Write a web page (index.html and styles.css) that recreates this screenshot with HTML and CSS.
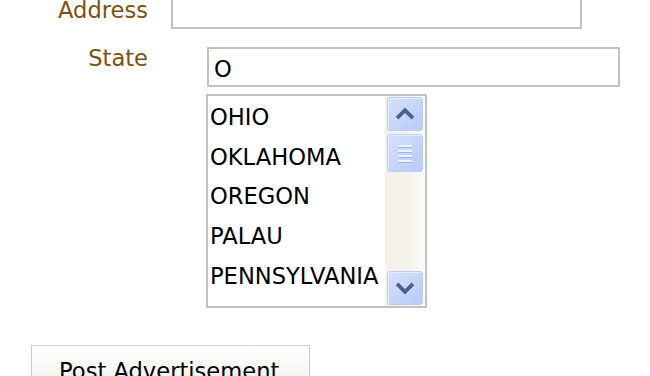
FILE: index.html
```html
<!DOCTYPE html>
<html lang="en">
<head>
    <meta charset="UTF-8">
    <meta name="viewport" content="width=device-width, initial-scale=1.0">
    <title>Post Advertisement</title>
    <link rel="stylesheet" href="styles.css">
</head>
<body>
    <form class="ad-form">
        <div class="row row-address">
            <label class="field-label">Address</label>
            <input class="text-field field-address" type="text">
        </div>
        <div class="row row-state">
            <label class="field-label label-state">State</label>
            <div class="state-col">
                <input class="text-field field-state" type="text" value="O">
                <div class="listbox">
                    <ul class="listbox__items">
                        <li>OHIO</li>
                        <li>OKLAHOMA</li>
                        <li>OREGON</li>
                        <li>PALAU</li>
                        <li>PENNSYLVANIA</li>
                    </ul>
                    <div class="scrollbar">
                        <div class="scrollbar__btn">
                            <svg viewBox="0 0 34 34"><path d="M10 20 L17 13 L24 20" /></svg>
                        </div>
                        <div class="scrollbar__thumb">
                            <span></span><span></span><span></span><span></span>
                        </div>
                        <div class="scrollbar__track"></div>
                        <div class="scrollbar__btn">
                            <svg viewBox="0 0 34 34"><path d="M10 14 L17 21 L24 14" /></svg>
                        </div>
                    </div>
                </div>
            </div>
        </div>
        <div class="row row-submit">
            <button class="post-btn" type="button">Post Advertisement</button>
        </div>
    </form>
</body>
</html>
```

FILE: styles.css
```css
*, *::before, *::after {
    box-sizing: border-box;
}
body {
    margin: 0;
    padding: 0;
    background: #fff;
    font-family: "DejaVu Sans", Verdana, sans-serif;
    font-size: 22.6px;
    overflow: hidden;
}
.ad-form { margin-top: -11px; }
.row { display: flex; align-items: flex-start; }
.field-label {
    width: 148px;
    text-align: right;
    color: #7a5310;
    line-height: 22px;
    margin-top: 10px;
}
.label-state { margin-top: 0; }
.text-field {
    height: 40px;
    border: 2px solid #c3c3bd;
    padding: 0 0 0 5px;
    font-family: inherit;
    font-size: 22.6px;
    color: #000;
    background: #fff;
    outline: none;
}
.field-address { width: 411px; margin-left: 23px; }
.row-state { margin-top: 18px; }
.state-col { margin-left: 59px; }
.field-state { width: 413px; display: block; padding-top: 3px; }

.listbox {
    display: flex;
    width: 221px;
    height: 214px;
    margin: 7px 0 0 -1px;
    border: 2px solid #c3c3bd;
    background: #fff;
}
.listbox__items {
    list-style: none;
    margin: 0;
    padding: 2px 0 0 2px;
    flex: 1;
    overflow: hidden;
    white-space: nowrap;
}
.listbox__items li { line-height: 39.7px; }

.scrollbar {
    width: 40px;
    display: flex;
    flex-direction: column;
    padding: 1px 2px 1px 2px;
    background: linear-gradient(to right, #f3f1ea 0, #f3f1ea 55%, #fdfdfb 100%);
}
.scrollbar__btn, .scrollbar__thumb {
    height: 34px;
    border: 1px solid #b9cdf6;
    border-radius: 3px;
    background: linear-gradient(to bottom right, #d4e1fd, #b8cbf8);
    box-shadow: inset 1px 1px 0 #e6eefe;
}
.scrollbar__btn svg { display: block; width: 100%; height: 100%; }
.scrollbar__btn path {
    fill: none;
    stroke: #4d6185;
    stroke-width: 4;
    stroke-linecap: square;
}
.scrollbar__thumb {
    margin-top: 3px;
    height: 38px;
    display: flex;
    flex-direction: column;
    align-items: center;
    justify-content: center;
    gap: 3px;
}
.scrollbar__thumb span {
    display: block;
    width: 14px;
    height: 2px;
    background: #eef3fe;
    box-shadow: 0 1px 0 #9db4e8;
}
.scrollbar__track { flex: 1; }

.row-submit { margin-top: 37px; padding-left: 31px; }
.post-btn {
    width: 279px;
    height: 46px;
    padding: 6px 0 0 27px;
    text-align: left;
    font-family: inherit;
    font-size: 22.6px;
    line-height: normal;
    color: #000;
    border: 1px solid #d0d0c8;
    border-left-color: #d3cda2;
    border-right-color: #d3cda2;
    background: linear-gradient(to bottom, #ffffff, #f0efe8);
    vertical-align: top;
}
```
